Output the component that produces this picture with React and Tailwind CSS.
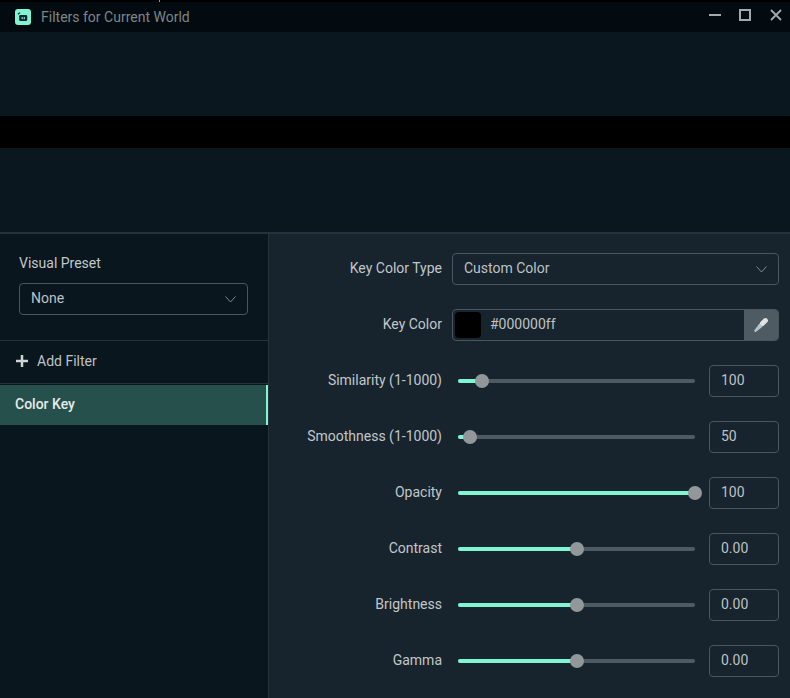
import React from "react";

const Chevron = () => (
  <svg width="11" height="7" viewBox="0 0 11 7" fill="none" stroke="#8b9499" strokeWidth="0.9">
    <path d="M0.5 0.5 L5.5 6 L10.5 0.5" />
  </svg>
);

const Select = ({ value, className }) => (
  <div className={`h-8 flex items-center justify-between pl-[11px] pr-[11px] border border-[#4a555d] rounded text-[14px] text-[#bdc2c5] ${className}`}>
    <span className="pb-[2px]">{value}</span>
    <Chevron />
  </div>
);

const Row = ({ label, children }) => (
  <div className="flex items-center h-8 gap-[10px]">
    <div className="w-[173px] pb-[2px] text-right text-[14px] text-[#c2c7ca] shrink-0 whitespace-nowrap">{label}</div>
    <div className="flex-1 min-w-0">{children}</div>
  </div>
);

const SliderRow = ({ label, pct, value }) => (
  <Row label={label}>
    <div className="flex items-center">
      <div className="w-[237px] ml-[6px] relative h-1 rounded-full bg-[#4f5b62] shrink-0">
        <div className="h-1 rounded-full bg-[#80f5d2]" style={{ width: `${pct}%` }} />
        <div
          className="absolute top-[-5px] w-[14px] h-[14px] rounded-full bg-[#91979b] -ml-[7px]"
          style={{ left: `${pct}%` }}
        />
      </div>
      <div className="ml-[14px] w-[70px] h-8 flex items-center pl-[11px] pb-[2px] border border-[#4a555d] rounded text-[14px] text-[#bdc2c5]">
        {value}
      </div>
    </div>
  </Row>
);

export default function App() {
  return (
    <div className="relative w-[790px] h-[698px] overflow-hidden flex flex-col bg-[#17242e] font-['Roboto',sans-serif]">
      <div className="absolute left-[159px] top-0 w-px h-[2px] bg-[#31c3a2]" />
      <div className="h-8 shrink-0 flex items-center bg-[#030b10] border-t-2 border-black">
        <div className="ml-[15px] w-4 h-4 rounded-[3px] bg-[#80f5d2] flex items-center justify-center">
          <svg width="12" height="12" viewBox="0 0 12 12">
            <path d="M1 3.2 L3 1.6" stroke="#17242e" strokeWidth="1.2" fill="none" />
            <rect x="2.2" y="4" width="8" height="6" rx="1.2" fill="#17242e" />
            <rect x="4.6" y="6" width="1.1" height="2.2" fill="#80f5d2" />
            <rect x="6.7" y="6" width="1.1" height="2.2" fill="#80f5d2" />
          </svg>
        </div>
        <div className="ml-[10px] text-[14px] text-[#7d8589]">Filters for Current World</div>
        <div className="ml-auto flex items-center pb-1">
          <svg width="12" height="12" viewBox="0 0 12 12" className="mr-[18px]">
            <rect x="0" y="5" width="12" height="2" fill="#a3a9ac" />
          </svg>
          <svg width="12" height="12" viewBox="0 0 12 12" className="mr-[19px]" fill="none" stroke="#a3a9ac" strokeWidth="2">
            <rect x="1" y="1" width="10" height="10" />
          </svg>
          <svg width="12" height="12" viewBox="0 0 12 12" className="mr-2" fill="none" stroke="#a3a9ac" strokeWidth="1.8">
            <path d="M1 1 L11 11 M11 1 L1 11" />
          </svg>
        </div>
      </div>

      <div className="h-[200px] shrink-0 flex flex-col justify-center bg-[#0b171e]">
        <div className="h-8 bg-black" />
      </div>

      <div className="h-[2px] shrink-0 bg-[#26323a]" />

      <div className="flex-1 flex min-h-0">
        <div className="w-[269px] shrink-0 bg-[#09161d] border-r border-[#26323a] flex flex-col">
          <div className="h-[106px] shrink-0 pl-[19px] pr-5 pt-5">
            <div className="text-[14px] leading-[18px] text-[#c2c7ca] mb-[11px]">Visual Preset</div>
            <Select value="None" className="w-[229px]" />
          </div>
          <div className="h-[44px] shrink-0 pb-[2px] border-y border-[#26323a] flex items-center pl-4">
            <svg width="12" height="12" viewBox="0 0 12 12" fill="#d0d4d6">
              <rect x="4.75" y="0" width="2.5" height="12" />
              <rect x="0" y="4.75" width="12" height="2.5" />
            </svg>
            <span className="ml-[9px] text-[14px] text-[#bdc2c5]">Add Filter</span>
          </div>
          <div className="mt-px h-10 shrink-0 pb-[2px] flex items-center pl-[15px] bg-[#26504b] border-r-2 border-[#80f5d2] text-[14px] font-medium text-[#e6eaea]">
            Color Key
          </div>
        </div>

        <div className="flex-1 min-w-0 pt-[19px] pr-[11px] flex flex-col gap-6">
          <Row label="Key Color Type">
            <Select value="Custom Color" />
          </Row>
          <Row label="Key Color">
            <div className="h-8 flex items-center border border-[#4a555d] rounded overflow-hidden">
              <div className="ml-[2px] w-[26px] h-[26px] rounded-sm bg-black shrink-0" />
              <span className="ml-[9px] pb-[2px] text-[14px] text-[#bdc2c5]">#000000ff</span>
              <div className="ml-auto w-[34px] h-8 bg-[#4f5b62] flex items-center justify-center">
                <svg width="16" height="16" viewBox="0 0 16 16">
                  <path d="M9.4 6.6 L12.4 3.6" stroke="#e2e4e4" strokeWidth="5" strokeLinecap="round" fill="none" />
                  <path d="M1 13.8 L6.4 6.6 L9.6 9.8 L2.4 15.2 Z" fill="#b3c4ce" />
                </svg>
              </div>
            </div>
          </Row>
          <SliderRow label="Similarity (1-1000)" pct={10} value="100" />
          <SliderRow label="Smoothness (1-1000)" pct={5} value="50" />
          <SliderRow label="Opacity" pct={100} value="100" />
          <SliderRow label="Contrast" pct={50} value="0.00" />
          <SliderRow label="Brightness" pct={50} value="0.00" />
          <SliderRow label="Gamma" pct={50} value="0.00" />
        </div>
      </div>
    </div>
  );
}
